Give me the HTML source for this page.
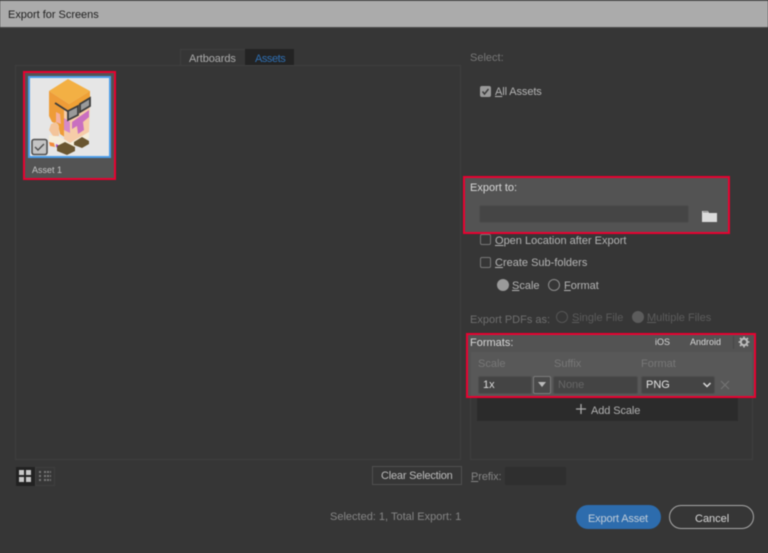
<!DOCTYPE html>
<html><head><meta charset="utf-8"><style>
html,body{margin:0;padding:0;background:#363636}
#p{position:relative;width:768px;height:553px;overflow:hidden;background:#363636;font-family:"Liberation Sans",sans-serif;font-size:11px;color:#b4b4b4;filter:blur(.45px)}
#p div{position:absolute;box-sizing:border-box}
.t{white-space:nowrap;line-height:14px;height:14px;margin-top:1px}
u{text-underline-offset:1px}
.cb{width:11px;height:11px;border:1px solid #777;border-radius:2px}
.rd{border-radius:50%;border:1px solid #8c8c8c;width:12px;height:12px}
.red{border:2px solid #ea0030;background:#535353}
.inp{background:#444;border:1px solid #4e4e4e;border-radius:2px}
</style></head><body><div id="p">
<div style="left:0;top:0;width:768px;height:28px;background:#ababab;border-top:1px solid #555;border-bottom:1px solid #4a4a4a"></div>
<div class="t" style="left:8px;top:7px;color:#222;letter-spacing:-.02px">Export for Screens</div>

<div style="left:15px;top:65px;width:446px;height:395px;border:1px solid #3f3f3f"></div>
<div style="left:180px;top:49px;width:66px;height:17px;border:1px solid #3f3f3f;border-bottom:0"></div>
<div class="t" style="left:189px;top:51px;color:#ababab;letter-spacing:-.1px">Artboards</div>
<div style="left:245px;top:49px;width:49px;height:16px;background:#232323"></div>
<div class="t" style="left:255px;top:51px;color:#2f6eb0;letter-spacing:-.45px">Assets</div>

<div class="red" style="left:23px;top:71px;width:93px;height:109px"></div>
<div style="left:28px;top:76px;width:83px;height:82px;background:#e6e6e6;border:2px solid #4b9ce8"></div>
<svg style="position:absolute;left:0;top:0" width="768" height="553" viewBox="0 0 768 553">
<polygon points="68,79 90,91 69,104 49,91" fill="#f3b044"/>
<polygon points="49,91 69,104 69,112 64,110 64,124 66,138 60,134 58,124 52,122 49,116" fill="#ee9c38"/>
<polygon points="69,104 90,91 90,100 69,112" fill="#efa136"/>
<polygon points="64,110 72,114 90,102 89,132 70,143 64,139" fill="#f6cca8"/>
<polygon points="56,112 60,114 61,124 56,122" fill="#f4b0a0"/>
<polygon points="64,118 70,122 70,133 64,130" fill="#d58ac8"/>
<polygon points="72,122 89,110 89,117 83,122 84,130 78,134 77,126 72,129" fill="#c96fc0"/>
<polygon points="51,124 56,122 59,126 59,136 53,136 49,130" fill="#f3c49a"/>
<polygon points="49,135 60,137 70,143 89,132 89,138 70,149 49,142" fill="#f5eedb"/>
<polygon points="49,142 54,143 55,147 50,146" fill="#f28a3c"/>
<polygon points="56,144 63,147 61,149 56,147" fill="#a94cc6"/>
<polygon points="57,146 65,142 75,147 75,151 67,155 57,151" fill="#6a5630"/>
<polygon points="74,142 82,137 89,141 89,144 82,148 74,145" fill="#6a5630"/>
<polyline points="55,103 69,112" fill="none" stroke="#3c3c3c" stroke-width="1.800"/>
<polygon points="68,111 78,106 78,115 68,120" fill="#9a9a9a" stroke="#3c3c3c" stroke-width="1.800"/>
<polygon points="80,104 90,98 90,106 80,112" fill="#9a9a9a" stroke="#3c3c3c" stroke-width="1.800"/>
<rect x="32" y="139.500" width="15" height="15" rx="2" fill="#c4c4c4" stroke="#505050" stroke-width="1.600"/>
<polyline points="35,147 38,150 44,144" fill="none" stroke="#505050" stroke-width="1.500"/>
</svg>
<div class="t" style="left:32px;top:162px;font-size:9px;color:#c8c8c8">Asset 1</div>

<div class="t" style="left:470px;top:50px;color:#777">Select:</div>
<div class="cb" style="left:480px;top:86px;background:#9a9a9a;border-color:#9a9a9a"></div>
<svg style="position:absolute;left:480px;top:86px" width="11" height="11"><polyline points="2.500,5.500 4.500,8 8.500,3" fill="none" stroke="#3a3a3a" stroke-width="1.500"/></svg>
<div class="t" style="left:495px;top:84px;letter-spacing:-.1px"><u>A</u>ll Assets</div>

<div class="red" style="left:463px;top:176px;width:267px;height:58px"></div>
<div class="t" style="left:470px;top:180px;color:#d8d8d8">Export to:</div>
<div class="inp" style="left:479px;top:205px;width:210px;height:18px;background:#454545"></div>
<svg style="position:absolute;left:702px;top:209px" width="16" height="14"><path d="M0 2h6l1 2h8v9H0z" fill="#dcdcdc"/><path d="M1 3h5" stroke="#888" stroke-width="1"/></svg>

<div class="cb" style="left:480px;top:234px"></div>
<div class="t" style="left:495px;top:233px"><u>O</u>pen Location after Export</div>
<div class="cb" style="left:480px;top:257px"></div>
<div class="t" style="left:495px;top:255px"><u>C</u>reate Sub-folders</div>
<div class="rd" style="left:497px;top:279px;background:#9a9a9a;border-color:#9a9a9a"></div>
<div class="t" style="left:512px;top:278px"><u>S</u>cale</div>
<div class="rd" style="left:548px;top:279px"></div>
<div class="t" style="left:564px;top:278px"><u>F</u>ormat</div>

<div class="t" style="left:470px;top:312px;color:#6e6e6e">Export PDFs as:</div>
<div class="rd" style="left:556px;top:311px;border-color:#555"></div>
<div class="t" style="left:572px;top:310px;color:#5c5c5c"><u>S</u>ingle File</div>
<div class="rd" style="left:632px;top:311px;border-color:#5c5c5c;background:#5c5c5c"></div>
<div class="t" style="left:647px;top:310px;color:#5c5c5c"><u>M</u>ultiple Files</div>

<div class="red" style="left:466px;top:333px;width:290px;height:65px"></div>
<div style="left:471px;top:352px;width:281px;height:44px;background:#585858"></div>
<div class="t" style="left:470px;top:335px;color:#d8d8d8">Formats:</div>
<div class="t" style="left:655px;top:334px;font-size:9px;color:#d8d8d8">iOS</div>
<div class="t" style="left:690px;top:334px;font-size:9px;color:#d8d8d8">Android</div>
<div style="left:733px;top:336px;width:1px;height:13px;background:#474747"></div>
<svg style="position:absolute;left:738px;top:336px" width="12" height="12" viewBox="0 0 12 12"><circle cx="6" cy="6" r="3.200" fill="none" stroke="#bbb" stroke-width="2"/><path d="M6 .5v2M6 9.500v2M.5 6h2M9.500 6h2M2 2l1.500 1.500M8.500 8.500L10 10M10 2L8.500 3.500M3.500 8.500L2 10" stroke="#bbb" stroke-width="1.600"/></svg>
<div class="t" style="left:478px;top:356px;color:#777">Scale</div>
<div class="t" style="left:554px;top:356px;color:#777">Suffix</div>
<div class="t" style="left:641px;top:356px;color:#777">Format</div>
<div class="inp" style="left:478px;top:376px;width:54px;height:18px"></div>
<div class="t" style="left:483px;top:377px;color:#ddd">1x</div>
<div class="inp" style="left:533px;top:376px;width:18px;height:18px;background:#4a4a4a;border-color:#7a7a7a"></div>
<svg style="position:absolute;left:538px;top:382px" width="8" height="6"><polygon points="0,0 8,0 4,5" fill="#bbb"/></svg>
<div class="inp" style="left:553px;top:376px;width:85px;height:18px"></div>
<div class="t" style="left:558px;top:377px;color:#666">None</div>
<div class="inp" style="left:641px;top:376px;width:74px;height:18px"></div>
<div class="t" style="left:646px;top:377px;color:#e4e4e4">PNG</div>
<svg style="position:absolute;left:702px;top:382px" width="10" height="6"><polyline points="1.500,1 5,4.500 8.500,1" fill="none" stroke="#ddd" stroke-width="1.500"/></svg>
<svg style="position:absolute;left:720px;top:380px" width="10" height="10"><path d="M1 1l8 8M9 1l-8 8" stroke="#737373" stroke-width="1.200"/></svg>

<div style="left:470px;top:398px;width:283px;height:62px;border:1px solid #3f3f3f;border-top:0"></div>
<div style="left:477px;top:398px;width:261px;height:23px;background:#2b2b2b"></div>
<svg style="position:absolute;left:576px;top:404px" width="10" height="10"><path d="M5 0v10M0 5h10" stroke="#aaa" stroke-width="1.300"/></svg>
<div class="t" style="left:591px;top:403px;color:#b0b0b0;letter-spacing:-.1px">Add Scale</div>

<div style="left:16px;top:467px;width:19px;height:19px;background:#222"></div>
<svg style="position:absolute;left:19px;top:470px" width="12" height="12"><path d="M0 0h5v5H0zM7 0h5v5H7zM0 7h5v5H0zM7 7h5v5H7z" fill="#c8c8c8"/></svg>
<div style="left:35px;top:467px;width:20px;height:19px;border:1px solid #3f3f3f"></div>
<svg style="position:absolute;left:39px;top:471px" width="13" height="11"><path d="M0 1h3M0 5h3M0 9h3M5 1h7M5 5h7M5 9h7" stroke="#777" stroke-width="2" stroke-dasharray="2 1"/></svg>
<div style="left:372px;top:466px;width:90px;height:19px;border:1px solid #4f4f4f"></div>
<div class="t" style="left:381px;top:468px;color:#bcbcbc;letter-spacing:-.2px">Clear Selection</div>
<div class="t" style="left:471px;top:469px;color:#858585;letter-spacing:-.1px"><u>P</u>refix:</div>
<div style="left:505px;top:467px;width:61px;height:18px;background:#2f2f2f"></div>
<div class="t" style="left:330px;top:509px;color:#858585">Selected: 1, Total Export: 1</div>
<div style="left:576px;top:505px;width:85px;height:24px;border-radius:12px;background:#2d6cad"></div>
<div class="t" style="left:588px;top:511px;color:#c0ccd8;letter-spacing:-.15px">Export Asset</div>
<div style="left:669px;top:505px;width:85px;height:24px;border-radius:12px;border:1.500px solid #a8a8a8"></div>
<div class="t" style="left:695px;top:511px;color:#d8d8d8">Cancel</div>
</div></body></html>
